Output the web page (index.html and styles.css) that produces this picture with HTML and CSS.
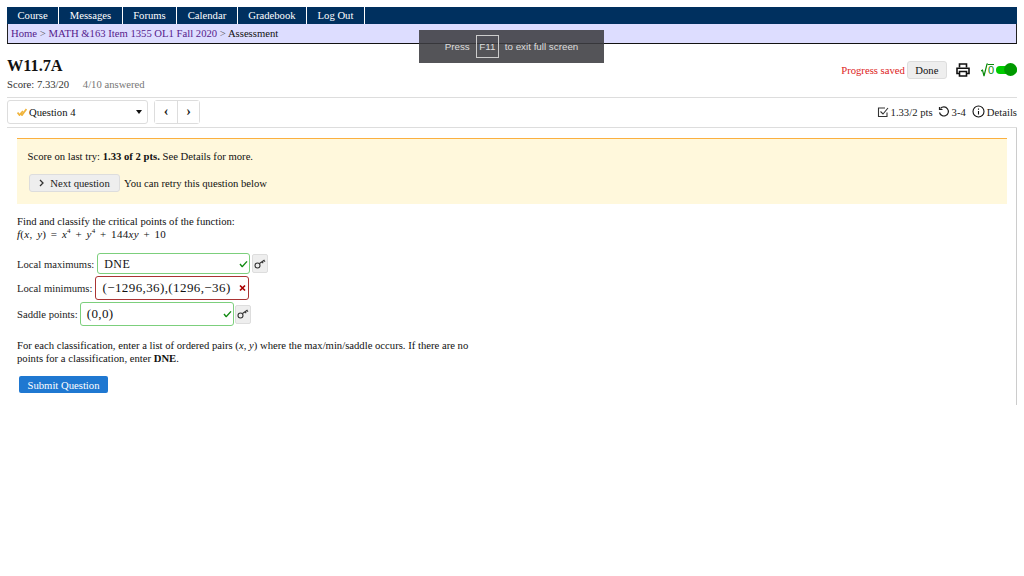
FILE: index.html
```html
<!DOCTYPE html>
<html>
<head>
    <meta charset="utf-8">
    <title>W11.7A</title>
    <link rel="stylesheet" href="styles.css">
</head>
<body>
    <div class="page">
        <!-- top nav -->
        <ul class="nav">
            <li>Course</li>
            <li>Messages</li>
            <li>Forums</li>
            <li>Calendar</li>
            <li>Gradebook</li>
            <li>Log Out</li>
        </ul>
        <div class="breadcrumb">
            <a>Home</a> <span class="sep">&gt;</span> <a>MATH &amp;163 Item 1355 OL1 Fall 2020</a> <span class="sep">&gt;</span> Assessment
        </div>

        <div class="title-row">
            <div>
                <h1>W11.7A</h1>
                <div class="score">Score: 7.33/20 <span class="answered">4/10 answered</span></div>
            </div>
            <div class="title-tools">
                <span class="saved">Progress saved</span>
                <button class="done">Done</button>
                <svg class="print" width="14" height="14" viewBox="0 0 14 14" fill="none" stroke="#111" stroke-width="1.6">
                    <path d="M3.5 4.5V1h7v3.5"/>
                    <path d="M3.5 10.5H1V5.2h12v5.3h-2.500"/>
                    <path d="M3.500 8.500h7V13h-7z"/>
                </svg>
                <span class="root"><svg width="7" height="14" viewBox="0 0 7 14" fill="none" stroke="#0a8a0a" stroke-width="1.200"><path d="M0 8l1.500 -.8L3 13 6 1h1"/></svg><span class="root-zero">0</span></span>
                <span class="toggle"><span class="knob"></span></span>
            </div>
        </div>

        <div class="question-bar">
            <div class="question-select">
                <svg class="q-check" width="10" height="8" viewBox="0 0 10 8" fill="none" stroke="#f0b43c" stroke-width="1.800"><path d="M.5 4.500L2.500 7 6 3"/><path d="M3.500 5L5 7 9.500 1"/></svg>
                <span>Question 4</span>
                <span class="caret"></span>
            </div>
            <div class="pager">
                <button>&#8249;</button>
                <button>&#8250;</button>
            </div>
            <div class="question-info">
                <svg width="12" height="12" viewBox="0 0 12 12" fill="none" stroke="#333" stroke-width="1.100"><path d="M10 6.500V10.500H1.500V2H8"/><path d="M3.500 5.500L6 8l5-6"/></svg>
                <span>1.33/2 pts</span>
                <svg class="retry" width="12" height="12" viewBox="0 0 12 12" fill="none" stroke="#222" stroke-width="1.200"><path d="M2.500 2.500A4.500 4.500 0 1 1 1.500 6.500"/><path d="M1.500 1v2.500H4.500"/></svg>
                <span>3-4</span>
                <svg class="info" width="13" height="13" viewBox="0 0 13 13" fill="none" stroke="#111" stroke-width="1.100"><circle cx="6.500" cy="6.500" r="5.500"/><path d="M6.500 6v3.500M6.500 3.500v1.200"/></svg>
                <span>Details</span>
            </div>
        </div>

        <div class="question">
            <div class="notice">
                <p class="notice-score">Score on last try: <b>1.33 of 2 pts.</b> See Details for more.</p>
                <div class="notice-actions">
                    <button class="next"><svg class="chev" width="5" height="8" viewBox="0 0 5 8" fill="none" stroke="#333" stroke-width="1.300"><path d="M1 1l3 3-3 3"/></svg>Next question</button>
                    <span>You can retry this question below</span>
                </div>
            </div>

            <p class="prompt">Find and classify the critical points of the function:<br>
                <span class="math"><i>f</i>(<i>x</i>, <i>y</i>) = <i>x</i><sup>4</sup> + <i>y</i><sup>4</sup> + 144<i>xy</i> + 10</span></p>

            <div class="answer">
                <label>Local maximums:</label>
                <div class="field ok field-max">DNE<svg class="mark" width="9" height="7" viewBox="0 0 10 8" fill="none" stroke="#108a10" stroke-width="1.600"><path d="M1 4l2.500 3L9 1"/></svg></div>
                <button class="key"><svg width="12" height="10" viewBox="0 0 12 10" fill="none" stroke="#333" stroke-width="1.100"><circle cx="3.500" cy="6.500" r="2.500"/><path d="M5.500 4.500L10.500 1M8 2.800l1.200 1.400M10 1.500l1 1.200"/></svg></button>
            </div>
            <div class="answer answer-min">
                <label>Local minimums:</label>
                <div class="field bad field-min">(&minus;1296,36),(1296,&minus;36)<svg class="mark cross" width="7" height="7" viewBox="0 0 7 7" fill="none" stroke="#a00" stroke-width="1.700"><path d="M1 1l5 5M6 1L1 6"/></svg></div>
            </div>
            <div class="answer answer-saddle">
                <label>Saddle points:</label>
                <div class="field ok field-saddle">(0,0)<svg class="mark" width="9" height="7" viewBox="0 0 10 8" fill="none" stroke="#108a10" stroke-width="1.600"><path d="M1 4l2.500 3L9 1"/></svg></div>
                <button class="key key-saddle"><svg width="12" height="10" viewBox="0 0 12 10" fill="none" stroke="#333" stroke-width="1.100"><circle cx="3.500" cy="6.500" r="2.500"/><path d="M5.500 4.500L10.500 1M8 2.800l1.200 1.400M10 1.500l1 1.200"/></svg></button>
            </div>

            <p class="help">For each classification, enter a list of ordered pairs (<i>x</i>, <i>y</i>) where the max/min/saddle occurs. If there are no points for a classification, enter <b>DNE</b>.</p>

            <button class="submit">Submit Question</button>
        </div>
    </div>

    <!-- browser fullscreen hint -->
    <div class="fullscreen-hint">Press <span class="f11">F11</span> to exit full screen</div>
</body>
</html>
```

FILE: styles.css
```css
body {
    margin: 0;
    background: white;
    font-family: "Liberation Serif", serif;
    font-size: 10.67px;
    color: #111;
}

.page {
    width: 1010px;
    margin-left: 7px;
    padding-top: 7px;
}

button {
    font-family: inherit;
}

.nav {
    display: flex;
    margin: 0;
    padding: 0;
    list-style: none;
    height: 17px;
    background: #00305f;
    color: white;
}

.nav li {
    padding: 0 10.500px;
    line-height: 17px;
    border-right: 1px solid white;
}

.breadcrumb {
    height: 20px;
    line-height: 19px;
    padding-left: 3px;
    box-sizing: border-box;
    background: #ddddff;
    border-left: 1px solid #222;
    border-right: 1px solid #222;
    border-bottom: 1px solid #111;
}

.breadcrumb a {
    color: #551a8b;
}

.sep {
    color: #555;
}

.title-row {
    display: flex;
    justify-content: space-between;
    height: 53px;
    border-bottom: 1px solid #ddd;
}

h1 {
    margin: 14px 0 0;
    font-size: 16.300px;
    line-height: 16px;
}

.score {
    margin-top: 4px;
    color: #333;
}

.answered {
    margin-left: 11px;
    color: #777;
}

.title-tools {
    display: flex;
    align-items: center;
    height: 51px;
}

.saved {
    color: #d22;
    margin-right: 2px;
}

.done {
    width: 40px;
    height: 18px;
    padding: 0;
    font-size: 10.67px;
    background: #eee;
    border: 1px solid #ddd;
    border-radius: 3px;
    color: #111;
}

.print {
    margin-left: 9px;
}

.root {
    display: flex;
    align-items: center;
    margin-left: 11px;
    color: #0a8a0a;
}

.root-zero {
    border-top: 1px solid #0a8a0a;
    font-size: 11px;
    line-height: 11px;
    font-family: "Liberation Sans", sans-serif;
    margin-top: 1px;
}

.toggle {
    position: relative;
    width: 21px;
    height: 8px;
    margin-left: 2px;
    background: #0c0;
    border-radius: 4px;
}

.knob {
    position: absolute;
    right: 0;
    top: -2.500px;
    width: 13px;
    height: 13px;
    background: #090;
    border-radius: 50%;
}

.question-bar {
    display: flex;
    align-items: center;
    height: 27px;
    padding-bottom: 2px;
    border-bottom: 1px solid #ddd;
}

.question-select {
    display: flex;
    align-items: center;
    width: 141px;
    height: 24px;
    box-sizing: border-box;
    padding: 0 5px 0 9px;
    border: 1px solid #ddd;
    border-radius: 3px;
}

.q-check {
    margin-right: 2px;
}

.caret {
    margin-left: auto;
    border-top: 4px solid #111;
    border-left: 3px solid transparent;
    border-right: 3px solid transparent;
}

.pager {
    display: flex;
    margin-left: 6px;
    height: 24px;
    border: 1px solid #ddd;
    border-radius: 3px;
    box-sizing: border-box;
}

.pager button {
    width: 22px;
    padding: 0;
    background: white;
    border: 0;
    font-size: 14px;
    font-weight: bold;
    color: #222;
}

.pager button + button {
    border-left: 1px solid #ddd;
}

.question-info {
    display: flex;
    align-items: center;
    gap: 2px;
    margin-left: auto;
    color: #222;
}

.retry {
    margin-left: 3px;
}

.info {
    margin-left: 4px;
}

.question {
    height: 277px;
    box-sizing: border-box;
    padding: 10px 9px 0 10px;
    border-right: 1px solid #ccc;
}

.notice {
    height: 66px;
    box-sizing: border-box;
    padding-top: 11px;
    background: #fff8dc;
    border-top: 1px solid #fbb040;
}

.notice-score {
    margin: 0 0 0 10.500px;
    line-height: 12px;
}

.notice-actions {
    display: flex;
    align-items: center;
    gap: 4px;
    margin: 12px 0 0 12px;
}

.next {
    width: 91px;
    height: 18px;
    padding: 0;
    font-size: 10.67px;
    background: #eee;
    border: 1px solid #ddd;
    border-radius: 3px;
    color: #222;
}

.chev {
    margin-right: 6px;
}

.prompt {
    margin: 11px 0 0;
    line-height: 13px;
}

.math {
    font-size: 11px;
    letter-spacing: 0.3px;
    word-spacing: 1.500px;
}

sup {
    font-size: 7px;
    line-height: 0;
}

.answer {
    display: flex;
    align-items: center;
    margin-top: 12px;
    height: 21px;
}

.answer label {
    color: #222;
}

.answer-min {
    margin-top: 2px;
    height: 24px;
}

.answer-saddle {
    margin-top: 2px;
    height: 24px;
}

.field {
    position: relative;
    height: 100%;
    box-sizing: border-box;
    margin-left: 3px;
    padding-left: 6px;
    line-height: 20px;
    font-size: 12px;
    letter-spacing: 0.4px;
    border: 1px solid;
    border-radius: 3px;
    background: white;
}

.ok {
    border-color: #7ccf7c;
}

.bad {
    border-color: #a33;
}

.field-max {
    width: 153px;
}

.field-min {
    width: 154px;
    line-height: 22px;
    font-size: 13px;
}

.field-saddle {
    width: 154px;
    margin-left: 2px;
    line-height: 22px;
    font-size: 13px;
}

.mark {
    position: absolute;
    right: 1px;
    top: 50%;
    transform: translateY(-50%);
}

.cross {
    right: 2px;
}

.key {
    display: flex;
    align-items: center;
    justify-content: center;
    width: 16px;
    height: 19px;
    padding: 0;
    margin-left: 2px;
    background: #eee;
    border: 1px solid #ddd;
    border-radius: 2px;
}

.key-saddle {
    margin-left: 1px;
}

.help {
    width: 470px;
    margin: 13px 0 0;
    line-height: 13px;
}

.submit {
    display: block;
    width: 89px;
    height: 17px;
    margin: 11px 0 0 2px;
    padding: 0;
    font-size: 10.67px;
    color: white;
    background: #1f78d1;
    border: 0;
    border-radius: 2px;
}

.fullscreen-hint {
    position: absolute;
    left: 419px;
    top: 30px;
    display: flex;
    align-items: center;
    justify-content: center;
    gap: 6px;
    width: 185px;
    height: 33px;
    background: rgba(60, 60, 65, 0.88);
    color: #ddd;
    font-family: "Liberation Sans", sans-serif;
    font-size: 9.800px;
}

.f11 {
    width: 21px;
    height: 21px;
    line-height: 21px;
    text-align: center;
    border: 1px solid #ccc;
}
```
